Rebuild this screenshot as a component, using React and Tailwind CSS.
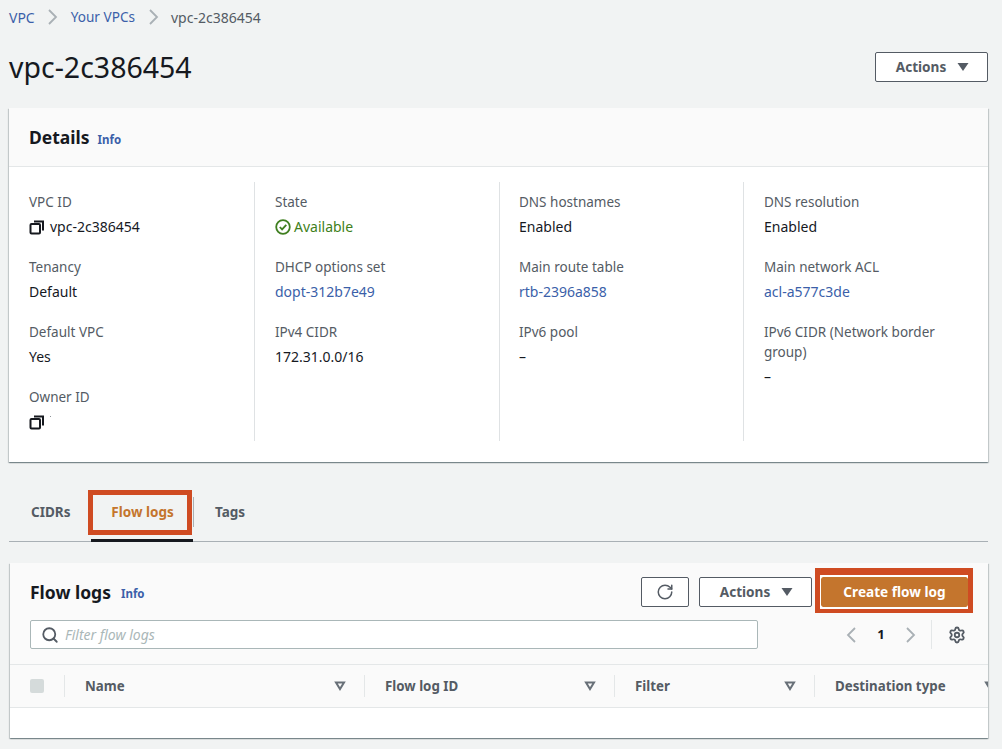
import { RotateCw, Search, Settings } from "lucide-react"

function CopyIcon() {
  return (
    <svg width="16" height="16" viewBox="0 0 16 16" fill="none" stroke="#16191f" strokeWidth="2" className="shrink-0">
      <rect x="1.5" y="5" width="9.5" height="9.5" rx="1" />
      <path d="M5 2.5h9v9" />
    </svg>
  )
}

function CheckIcon() {
  return (
    <svg width="16" height="16" viewBox="0 0 16 16" fill="none" stroke="#3f7f20" strokeWidth="1.8" className="shrink-0">
      <circle cx="8" cy="8" r="6.8" />
      <path d="M4.8 8l2.3 2.4 4.2-4.6" />
    </svg>
  )
}

function SortIcon() {
  return (
    <svg width="12" height="10" viewBox="0 0 12 10" fill="none" stroke="#687078" strokeWidth="2" className="shrink-0">
      <path d="M2 1.5h8L6 8z" />
    </svg>
  )
}

function Caret() {
  return (
    <svg width="12" height="8" viewBox="0 0 12 8" fill="#545b64" className="shrink-0">
      <path d="M0.5 0h11L6 8z" />
    </svg>
  )
}

function Chevron({ left }) {
  return (
    <svg width="10" height="16" viewBox="0 0 10 16" fill="none" stroke="#a9b0b5" strokeWidth="1.8" className="shrink-0">
      <path d={left ? "M9 1L2 8l7 7" : "M1 1l7 7-7 7"} />
    </svg>
  )
}

function Field({ label, children }) {
  return (
    <div className="mb-[15px]">
      <div className="text-[13.5px] leading-[20px] mb-[5px] text-[#545b64]">{label}</div>
      <div className="text-[14px] leading-[20px] h-[25px] text-[#16191f]">{children}</div>
    </div>
  )
}

const A = ({ children }) => <span className="text-[#3b5fa9]">{children}</span>

function Column({ children, className = "" }) {
  return <div className={`h-[259px] pt-[10px] ${className}`}>{children}</div>
}

function Th({ children, w }) {
  return (
    <div className="flex items-center h-[22px] border-l border-[#e4e7e8] pl-[20px] shrink-0 font-bold text-[13.3px] text-[#545b64]" style={{ width: w }}>
      <span className="flex-1 pt-[2px]">{children}</span>
      <span className="mr-[18px]"><SortIcon /></span>
    </div>
  )
}

function ActionsButton({ className = "" }) {
  return (
    <button className={`w-[113px] h-[30px] border border-[#545b64] rounded-[2px] bg-white flex items-center justify-center gap-[11px] pl-[2px] font-bold text-[13.6px] leading-[20px] text-[#545b64] ${className}`}>
      Actions <Caret />
    </button>
  )
}

export default function App() {
  return (
    <div className="w-[1002px] h-[749px] overflow-hidden bg-[#f1f3f3] font-['Noto_Sans',sans-serif] text-[#16191f] pl-[9px] pr-[14px]">
      <div className="h-[34px] flex items-center text-[14px] text-[#545b64]">
        <A>VPC</A>
        <span className="ml-[13px] mr-[13px]"><Chevron /></span>
        <span className="text-[13.6px] text-[#3b5fa9]">Your VPCs</span>
        <span className="ml-[14px] mr-[12px]"><Chevron /></span>
        <span>vpc-2c386454</span>
      </div>

      <div className="flex items-center justify-between h-[66px]">
        <h1 className="text-[28.5px] leading-[36px] text-[#16191f]">vpc-2c386454</h1>
        <ActionsButton />
      </div>

      <section className="mt-[8px] h-[354px] bg-white shadow-[0_1px_1px_rgba(0,28,36,0.3),1px_1px_1px_rgba(0,28,36,0.15),-1px_1px_1px_rgba(0,28,36,0.15)] w-[979px]">
        <div className="h-[59px] bg-[#fafafa] border-b border-[#e4e7e8] pl-[20px] pt-[15px] flex items-baseline gap-[8px]">
          <h2 className="font-bold text-[17.5px] leading-[28px]">Details</h2>
          <span className="font-bold text-[11.5px] text-[#3b5fa9]">Info</span>
        </div>
        <div className="flex pt-[15px]">
          <Column className="w-[245px] pl-[20px]">
            <Field label="VPC ID"><span className="flex items-center gap-[5px]"><CopyIcon />vpc-2c386454</span></Field>
            <Field label="Tenancy">Default</Field>
            <Field label="Default VPC">Yes</Field>
            <Field label="Owner ID">
              <span className="flex items-start gap-[5px] pt-[2px]">
                <CopyIcon />
                <span className="w-[1px] h-[1px] mt-[2px] bg-[#8d9499]" />
              </span>
            </Field>
          </Column>
          <Column className="w-[245px] pl-[20px] border-l border-[#dfe2e4]">
            <Field label="State"><span className="flex items-center gap-[3px] text-[#3f7f20]"><CheckIcon />Available</span></Field>
            <Field label="DHCP options set"><A>dopt-312b7e49</A></Field>
            <Field label="IPv4 CIDR">172.31.0.0/16</Field>
          </Column>
          <Column className="w-[244px] pl-[19px] border-l border-[#dfe2e4]">
            <Field label="DNS hostnames">Enabled</Field>
            <Field label="Main route table"><A>rtb-2396a858</A></Field>
            <Field label="IPv6 pool">–</Field>
          </Column>
          <Column className="w-[245px] pl-[20px] border-l border-[#dfe2e4]">
            <Field label="DNS resolution">Enabled</Field>
            <Field label="Main network ACL"><A>acl-a577c3de</A></Field>
            <Field label={<>IPv6 CIDR (Network border<br />group)</>}>–</Field>
          </Column>
        </div>
      </section>

      <div className="relative mt-[27px] h-[53px] border-b border-[#a9b0b5] flex text-[13.5px] font-bold text-[#545b64]">
        <div className="w-[82px] pl-[22px] flex items-center pb-[5px]">CIDRs</div>
        <div className="w-[102px] text-[#c4752d] flex items-center justify-center pb-[4px] pl-[1px] border-b-[3px] border-b-[#16191f] -mb-px">Flow logs</div>
        <div className="pl-[22px] flex items-center pb-[5px]">Tags</div>
        <div className="absolute left-[184px] top-[8px] h-[30px] border-l border-[#a9b0b5]" />
        <div className="absolute left-[79px] top-[1px] w-[104px] h-[45px] border-[5px] border-[#cf4b22]" />
      </div>

      <section className="mt-[21px] ml-[1px] w-[978px] h-[175px] bg-white shadow-[0_1px_1px_rgba(0,28,36,0.3),1px_1px_1px_rgba(0,28,36,0.15),-1px_1px_1px_rgba(0,28,36,0.15)]">
        <div className="h-[102px] bg-[#fafafa] border-b border-[#e4e7e8] px-[20px] pt-[13px]">
          <div className="flex items-center h-[32px]">
            <h2 className="font-bold text-[17.5px]">Flow logs</h2>
            <span className="ml-[10px] mt-[4px] font-bold text-[11.5px] text-[#3b5fa9]">Info</span>
            <div className="ml-auto flex items-center relative">
              <button className="w-[48px] h-[30px] border border-[#545b64] rounded-[2px] bg-white flex items-center justify-center text-[#545b64]">
                <RotateCw size={18} strokeWidth={2} />
              </button>
              <ActionsButton className="ml-[10px]" />
              <button className="ml-[9px] w-[147px] h-[30px] rounded-[2px] bg-[#c4752d] text-white font-bold text-[13.6px] leading-[20px] outline-[2px] outline-solid outline-white">
                Create flow log
              </button>
              <div className="absolute right-[-5px] top-[-9px] w-[158px] h-[45px] border-x-[5px] border-t-[7px] border-b-[4px] border-[#cf4b22]" />
            </div>
          </div>
          <div className="flex items-center mt-[12px]">
            <div className="w-[728px] h-[29px] border border-[#aab7b8] rounded-[2px] bg-white flex items-center pl-[10px] gap-[6px]">
              <Search size={18} strokeWidth={2.4} className="text-[#545b64]" />
              <span className="italic text-[14px] text-[#aab7b8]">Filter flow logs</span>
            </div>
            <div className="ml-auto flex items-center">
              <Chevron left />
              <span className="w-[50px] text-center font-bold text-[13px] text-[#16191f]">1</span>
              <Chevron />
              <div className="h-[29px] border-l border-[#e4e7e8] ml-[15px] pl-[16px] mr-[2px] flex items-center">
                <Settings size={18} strokeWidth={2.4} className="text-[#545b64]" />
              </div>
            </div>
          </div>
        </div>
        <div className="h-[43px] bg-[#fafafa] border-b border-[#e4e7e8] flex items-center overflow-hidden pl-[20px]">
          <div className="w-[14px] h-[14px] rounded-[2px] bg-[#d5dbdb] shrink-0 mr-[20px]" />
          <Th w={300}>Name</Th>
          <Th w={250}>Flow log ID</Th>
          <Th w={200}>Filter</Th>
          <Th w={200}>Destination type</Th>
        </div>
      </section>
    </div>
  )
}
